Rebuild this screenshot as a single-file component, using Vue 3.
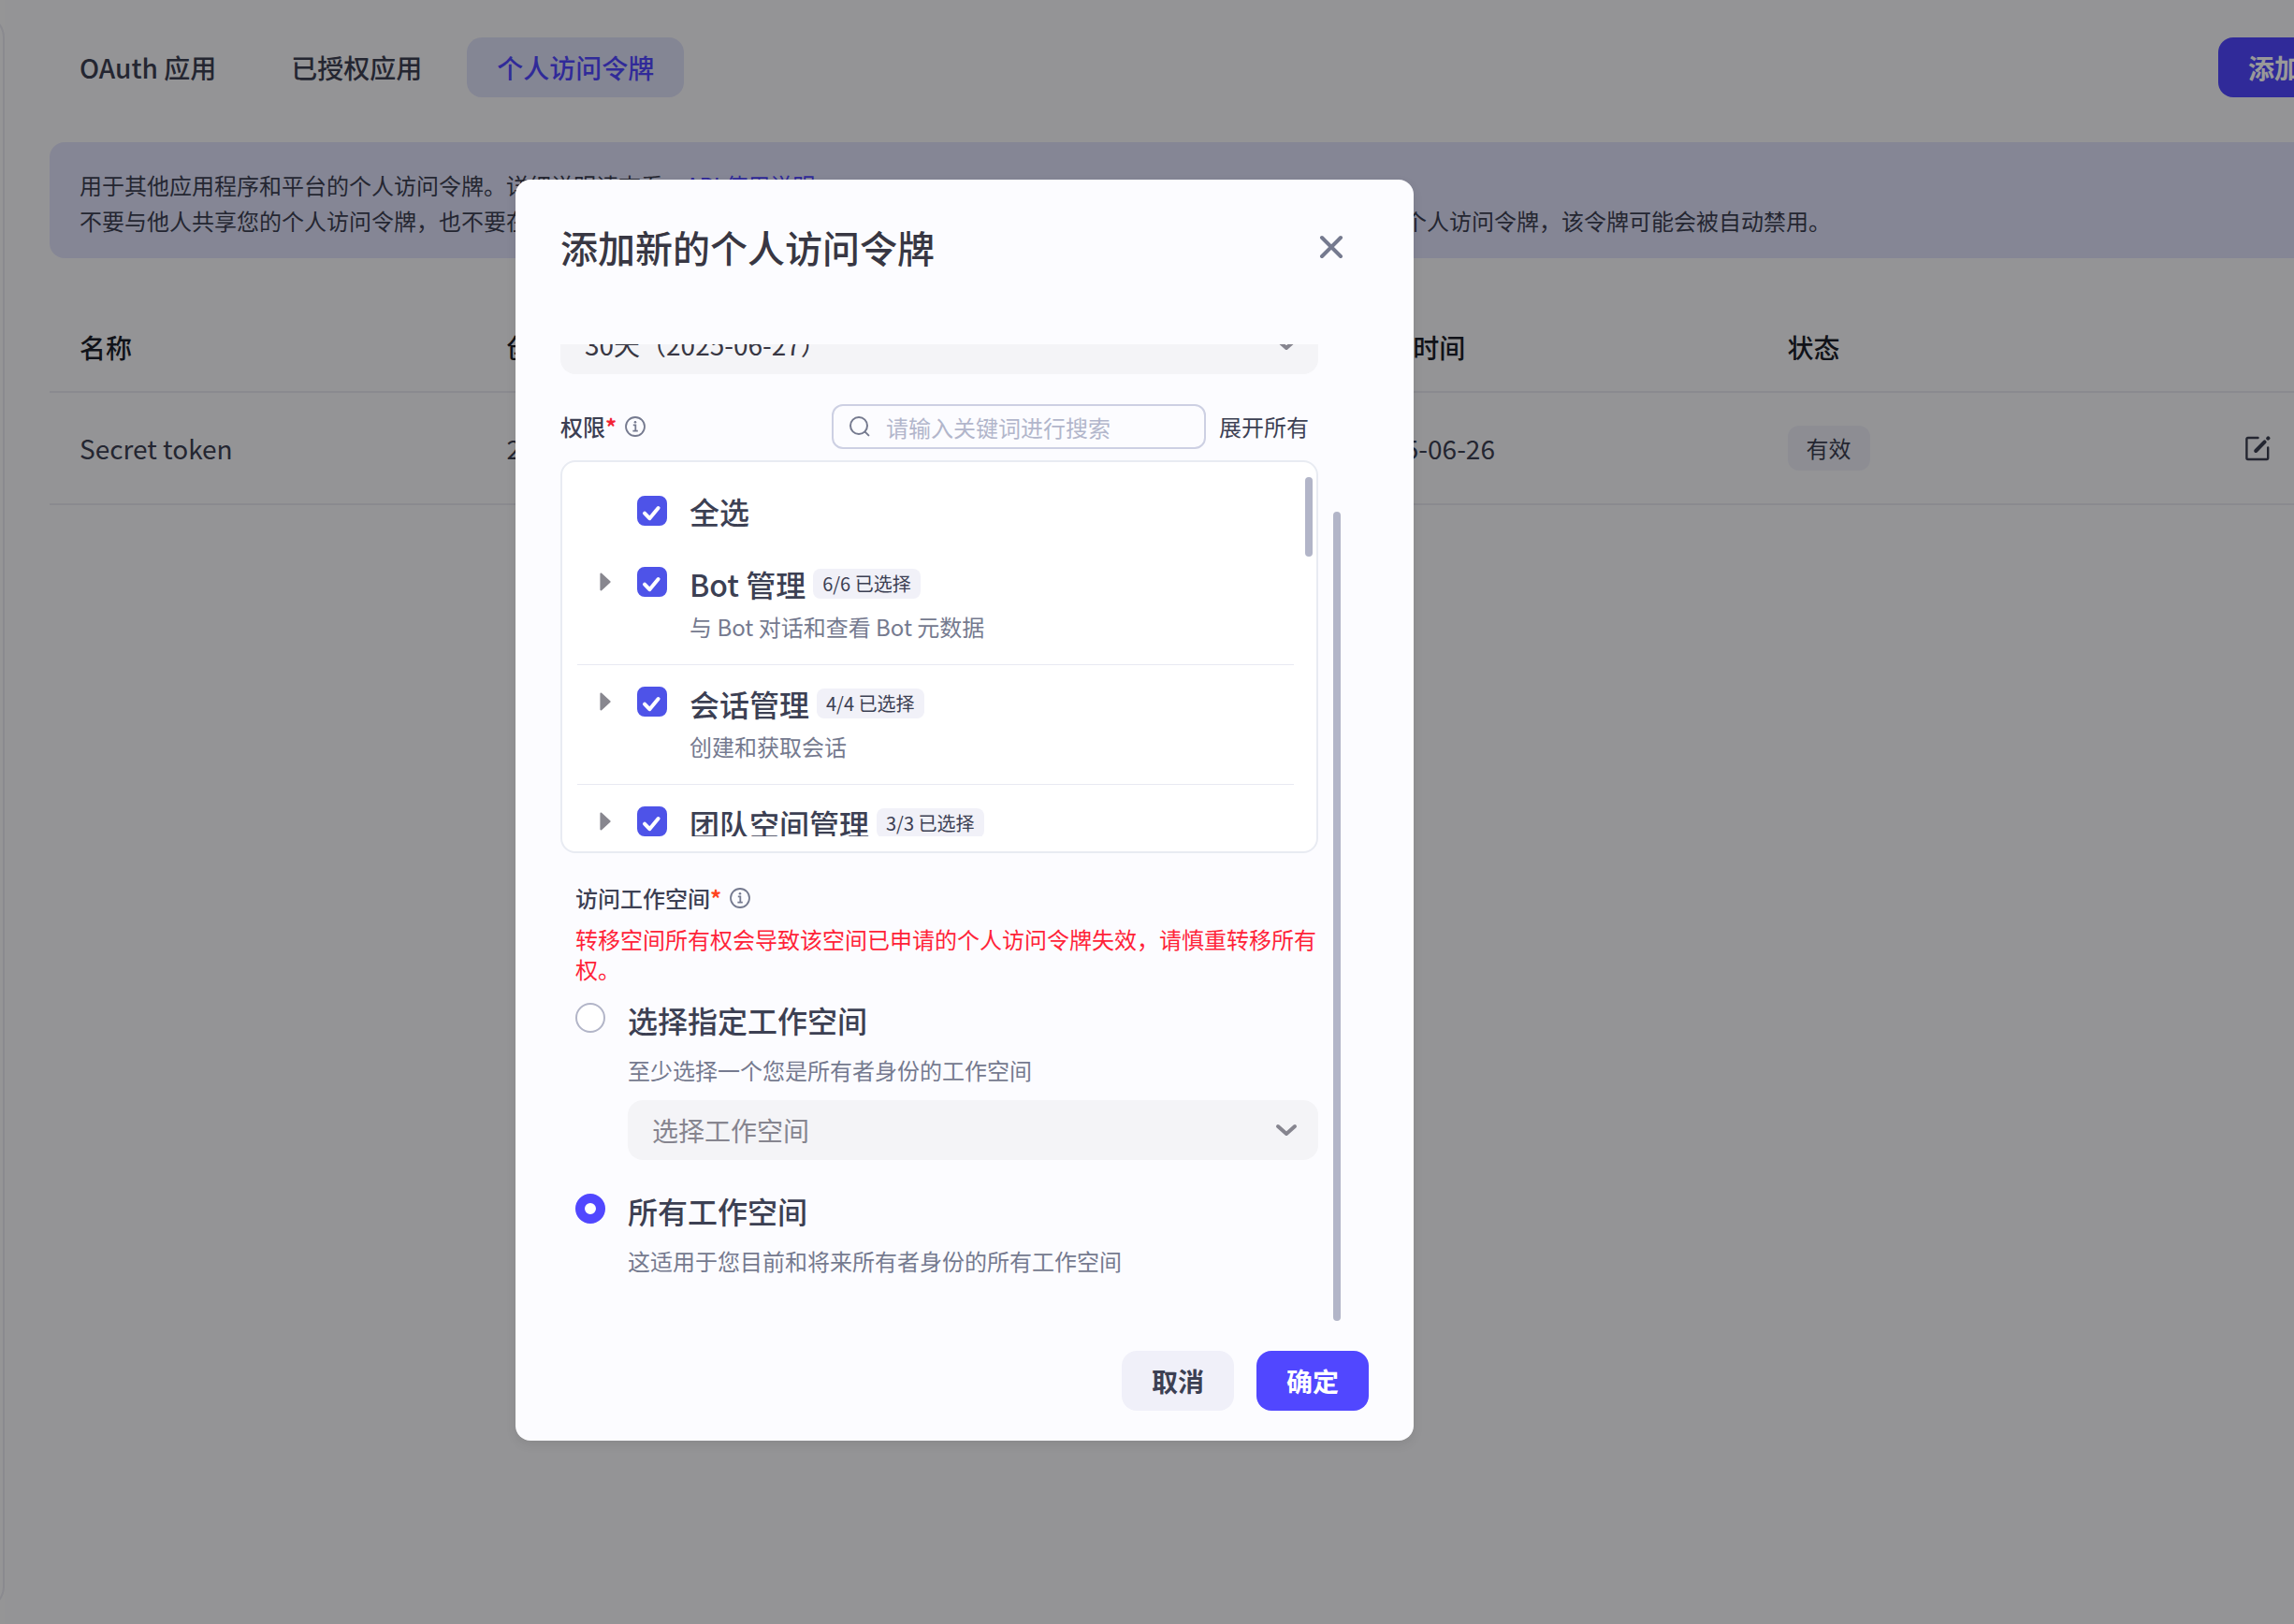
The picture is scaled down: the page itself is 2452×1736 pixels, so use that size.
<template>
  <div class="page">
    <aside class="sidebar"></aside>

    <main class="content">
      <div class="toolbar">
        <nav class="tabs">
          <button
            v-for="tab in tabs"
            :key="tab"
            type="button"
            class="tab"
            :class="{ active: tab === activeTab }"
            @click="activeTab = tab"
          >{{ tab }}</button>
        </nav>
        <button type="button" class="btn primary" @click="open = true">添加新令牌</button>
      </div>

      <div class="notice">
        <p>用于其他应用程序和平台的个人访问令牌。详细说明请查看：<a href="#">API 使用说明</a></p>
        <p>不要与他人共享您的个人访问令牌，也不要在浏览器或其他客户端代码中暴露它，以保护您的账户安全。如果我们发现了任何已泄露的个人访问令牌，该令牌可能会被自动禁用。</p>
      </div>

      <table class="tokens">
        <thead>
          <tr>
            <th>名称</th>
            <th>创建时间</th>
            <th>最后使用时间</th>
            <th>过期时间</th>
            <th>状态</th>
            <th class="actions"></th>
          </tr>
        </thead>
        <tbody>
          <tr v-for="token in tokens" :key="token.name">
            <td>{{ token.name }}</td>
            <td>{{ token.created }}</td>
            <td>{{ token.lastUsed }}</td>
            <td>{{ token.expires }}</td>
            <td><span class="status">{{ token.status }}</span></td>
            <td class="actions">
              <button type="button" class="icon-btn" aria-label="编辑">
                <svg width="28" height="28" viewBox="0 0 28 28" fill="none" stroke="currentColor" stroke-width="2.4" stroke-linecap="round" stroke-linejoin="round">
                  <path d="M14.5 3H3.8C3 3 2.4 3.6 2.4 4.4V24.6C2.4 25.4 3 26 3.8 26H23.8C24.6 26 25.2 25.4 25.2 24.6V13.5" />
                  <path d="M12.2 17L21.6 7.4" stroke-width="4" />
                  <path d="M25.2 3.6L25.4 3.4" stroke-width="4" />
                </svg>
              </button>
            </td>
          </tr>
        </tbody>
      </table>
    </main>

    <div v-if="open" class="mask">
      <form class="modal" role="dialog" aria-labelledby="modal-title" @submit.prevent="open = false">
        <header class="modal-header">
          <h2 id="modal-title">添加新的个人访问令牌</h2>
          <button type="button" class="icon-btn close" aria-label="关闭" @click="open = false">
            <svg width="26" height="26" viewBox="0 0 26 26" fill="none" stroke="currentColor" stroke-width="4" stroke-linecap="round">
              <path d="M3 3L23 23M23 3L3 23" />
            </svg>
          </button>
        </header>

        <div class="modal-body">
          <div class="fields">
            <div class="select expiry">
              <select v-model="expiry" aria-label="过期时间">
                <option value="30">30天（2025-06-27）</option>
              </select>
              <svg class="chevron" width="24" height="14" viewBox="0 0 24 14" fill="none" stroke="currentColor" stroke-width="4" stroke-linecap="round" stroke-linejoin="round">
                <path d="M3 3L12 11L21 3" />
              </svg>
            </div>

            <div class="scope-bar">
              <span class="field-label">权限<i class="required">*</i></span>
              <svg class="info" width="24" height="24" viewBox="0 0 24 24" fill="none" stroke="currentColor" stroke-width="1.8">
                <circle cx="12" cy="12" r="10" />
                <path d="M9.8 10.4H12.3V16.4M9.4 16.6H14.8" />
                <circle cx="12" cy="7.2" r="1.3" fill="currentColor" stroke="none" />
              </svg>
              <label class="search">
                <svg width="24" height="24" viewBox="0 0 24 24" fill="none" stroke="currentColor" stroke-width="2" stroke-linecap="round">
                  <circle cx="11" cy="11" r="9" />
                  <path d="M17.6 17.6L21.4 21.4" />
                </svg>
                <input v-model="keyword" type="text" placeholder="请输入关键词进行搜索" aria-label="搜索权限" />
              </label>
              <button type="button" class="expand">展开所有</button>
            </div>

            <div class="scope-box">
              <div class="scope-list">
                <label class="scope-all">
                  <span class="check">
                    <input type="checkbox" :checked="allChecked" @change="toggleAll" />
                    <svg width="32" height="32" viewBox="0 0 32 32"><path d="M8 18.6L13.3 24.2L22.6 13" /></svg>
                  </span>
                  <span class="scope-title">全选</span>
                </label>

                <div v-for="scope in scopes" :key="scope.name" class="scope">
                  <button type="button" class="arrow" :aria-label="'展开' + scope.name">
                    <svg width="12" height="20" viewBox="0 0 12 20"><path d="M1.4 1.6L10.6 10L1.4 18.4Z" /></svg>
                  </button>
                  <span class="check">
                    <input :id="scope.id" v-model="scope.checked" type="checkbox" />
                    <svg width="32" height="32" viewBox="0 0 32 32"><path d="M8 18.6L13.3 24.2L22.6 13" /></svg>
                  </span>
                  <div class="scope-info">
                    <div class="scope-head">
                      <label :for="scope.id" class="scope-title">{{ scope.name }}</label>
                      <span class="count">{{ scope.total }}/{{ scope.total }} 已选择</span>
                    </div>
                    <p v-if="scope.desc" class="desc">{{ scope.desc }}</p>
                  </div>
                </div>
              </div>
              <div class="scrollbar"><div class="thumb short"></div></div>
            </div>

            <section class="workspace">
              <div class="workspace-label">
                <span class="field-label">访问工作空间<i class="required orange">*</i></span>
                <svg class="info" width="24" height="24" viewBox="0 0 24 24" fill="none" stroke="currentColor" stroke-width="1.8">
                  <circle cx="12" cy="12" r="10" />
                  <path d="M9.8 10.4H12.3V16.4M9.4 16.6H14.8" />
                  <circle cx="12" cy="7.2" r="1.3" fill="currentColor" stroke="none" />
                </svg>
              </div>
              <p class="warning">转移空间所有权会导致该空间已申请的个人访问令牌失效，请慎重转移所有权。</p>

              <div class="option">
                <input id="ws-some" v-model="workspace" class="radio" type="radio" name="workspace" value="some" />
                <div class="option-info">
                  <label for="ws-some">选择指定工作空间</label>
                  <p class="desc">至少选择一个您是所有者身份的工作空间</p>
                  <div class="select">
                    <select class="placeholder" aria-label="选择工作空间">
                      <option>选择工作空间</option>
                    </select>
                    <svg class="chevron" width="24" height="14" viewBox="0 0 24 14" fill="none" stroke="currentColor" stroke-width="4" stroke-linecap="round" stroke-linejoin="round">
                      <path d="M3 3L12 11L21 3" />
                    </svg>
                  </div>
                </div>
              </div>

              <div class="option">
                <input id="ws-all" v-model="workspace" class="radio" type="radio" name="workspace" value="all" />
                <div class="option-info">
                  <label for="ws-all">所有工作空间</label>
                  <p class="desc">这适用于您目前和将来所有者身份的所有工作空间</p>
                </div>
              </div>
            </section>
          </div>
          <div class="scrollbar bottom"><div class="thumb tall"></div></div>
        </div>

        <footer class="modal-footer">
          <button type="button" class="btn" @click="open = false">取消</button>
          <button type="submit" class="btn primary">确定</button>
        </footer>
      </form>
    </div>
  </div>
</template>

<script setup>
import { computed, ref } from 'vue';

const tabs = ['OAuth 应用', '已授权应用', '个人访问令牌'];
const activeTab = ref('个人访问令牌');
const open = ref(true);
const expiry = ref('30');
const keyword = ref('');
const workspace = ref('all');

const tokens = [
  { name: 'Secret token', created: '2025-05-27', lastUsed: '2025-05-27', expires: '2025-06-26', status: '有效' }
];

const scopes = ref([
  { id: 'scope-bot', name: 'Bot 管理', desc: '与 Bot 对话和查看 Bot 元数据', total: 6, checked: true },
  { id: 'scope-chat', name: '会话管理', desc: '创建和获取会话', total: 4, checked: true },
  { id: 'scope-team', name: '团队空间管理', desc: '', total: 3, checked: true }
]);

const allChecked = computed(() => scopes.value.every(s => s.checked));

const toggleAll = (event) => {
  scopes.value.forEach(s => {
    s.checked = event.target.checked;
  });
};
</script>

<style>
body { background: #f9f9fb; }
</style>

<style scoped>
.page {
  display: flex;
  position: relative;
  min-height: 100vh;
  overflow: hidden;
  font-family: "Noto Sans CJK SC", sans-serif;
  font-size: 28px;
  color: #3c4053;
}

.page * { box-sizing: border-box; }

button, input, select { font: inherit; color: inherit; }
button { border: 0; background: none; padding: 0; cursor: pointer; }
p, h2 { margin: 0; }

.sidebar {
  flex: none;
  width: 80px;
  margin: 16px 0 16px -75px;
  border: 2px solid #e6e6ef;
  border-radius: 24px;
}

/* the table area runs past the right edge of the window */
.content {
  flex: 1;
  min-width: 0;
  margin-right: -123px;
  padding: 40px 0 0 48px;
  background: #f7f7fa;
}

.toolbar {
  display: flex;
  justify-content: space-between;
  margin-bottom: 48px;
}
.tabs { display: flex; gap: 16px; }
.tab {
  height: 64px;
  padding: 0 32px;
  border-radius: 16px;
  font-weight: 500;
}
.tab.active { background: #dddff7; color: #5147ff; }

.btn {
  height: 64px;
  padding: 0 32px;
  border-radius: 16px;
  background: #f0f0f9;
  color: #3c4053;
  font-weight: 700;
}
.btn.primary { background: #5147ff; color: #fff; }

.notice {
  padding: 27px 32px 21px;
  border-radius: 16px;
  background: #dee0f9;
  font-size: 24px;
  line-height: 38px;
  white-space: nowrap;
}
.notice a { color: #5147ff; text-decoration: none; }

.tokens {
  width: 100%;
  margin-top: 47px;
  table-layout: fixed;
  border-collapse: collapse;
}
.tokens th, .tokens td {
  padding: 0 32px;
  border-bottom: 2px solid #e6e6ef;
  text-align: left;
}
.tokens th { height: 96px; font-weight: 500; color: #1c1f2b; }
.tokens td { height: 120px; }
.tokens .actions { width: 240px; padding-left: 64px; }
.status {
  display: inline-block;
  padding: 0 20px;
  border-radius: 12px;
  background: #ebecf6;
  font-size: 24px;
  line-height: 48px;
}

.icon-btn { display: flex; align-items: center; justify-content: center; }

.mask {
  position: absolute;
  inset: 0;
  display: flex;
  align-items: center;
  justify-content: center;
  padding: 0 390px 4px 0;
  background: rgba(0, 0, 0, 0.4);
}
.modal {
  width: 960px;
  border-radius: 16px;
  background: #fcfcff;
  box-shadow: 0 4px 12px rgba(0, 0, 0, 0.08);
}
.modal-header {
  display: flex;
  align-items: flex-start;
  justify-content: space-between;
  height: 176px;
  padding: 44px 68px 0 48px;
}
.modal-header h2 {
  font-size: 40px;
  font-weight: 500;
  line-height: 56px;
  color: #383743;
}
.close { width: 40px; height: 56px; color: #757a8f; }

.modal-body {
  display: flex;
  gap: 16px;
  padding: 0 78px 0 48px;
  overflow: hidden;
}
.fields { flex: 1; min-width: 0; padding-bottom: 48px; }

.select { position: relative; }
/* scrolled halfway under the header */
.expiry { margin-top: -32px; color: #383743; }
.select select {
  display: block;
  width: 100%;
  height: 64px;
  padding: 0 26px;
  border: 0;
  border-radius: 16px;
  background: #f4f4f7;
  appearance: none;
}
.select .placeholder { color: #86858f; }
.chevron {
  position: absolute;
  top: 25px;
  right: 22px;
  color: #86858f;
}

.scope-bar {
  display: flex;
  align-items: center;
  margin: 32px 0 12px;
  font-size: 24px;
}
.field-label { font-size: 24px; line-height: 32px; font-weight: 500; }
.required { color: #f22435; font-style: normal; font-weight: 700; }
.required.orange { color: #ff441e; }
.info { margin-left: 8px; color: #757a8f; }

.search {
  display: flex;
  align-items: center;
  gap: 16px;
  width: 400px;
  height: 48px;
  margin-left: auto;
  padding: 0 16px;
  border: 2px solid #cdd0e3;
  border-radius: 12px;
  color: #757a8f;
}
.search input {
  flex: 1;
  min-width: 0;
  padding: 0;
  border: 0;
  outline: none;
  background: none;
  color: #3c4053;
}
.search input::placeholder { color: #b2b6cb; }
.expand { margin: 0 10px 0 14px; padding-bottom: 2px; }

.scope-box {
  display: flex;
  gap: 12px;
  padding: 16px 4px 16px 16px;
  border: 2px solid #e8ebf2;
  border-radius: 16px;
  background: #fff;
}
.scope-list { flex: 1; height: 384px; overflow: hidden; }
.scope-all {
  display: flex;
  gap: 24px;
  height: 73px;
  padding: 20px 0 0 64px;
  line-height: 32px;
}
.scope {
  display: flex;
  padding: 23px 0 24px 24px;
  border-bottom: 1px solid #e8e9f2;
  line-height: 36px;
}
.scope-title { font-size: 32px; font-weight: 500; }
.arrow { display: flex; width: 40px; height: 32px; align-items: center; }
.arrow svg {
  fill: #88878f;
  stroke: #88878f;
  stroke-width: 2;
  stroke-linejoin: round;
}

.check { display: grid; flex: none; width: 32px; height: 32px; }
.check input {
  grid-area: 1 / 1;
  width: 32px;
  height: 32px;
  margin: 0;
  border: 2px solid #b2b5c8;
  border-radius: 8px;
  appearance: none;
}
.check input:checked { border-color: #4e53e8; background: #4e53e8; }
.check svg {
  grid-area: 1 / 1;
  z-index: 1;
  fill: none;
  stroke: #fff;
  stroke-width: 4;
  stroke-linecap: round;
  stroke-linejoin: round;
  pointer-events: none;
}

.scope-info { margin-left: 24px; }
.scope-head { display: flex; gap: 8px; }
.count {
  height: 32px;
  margin-top: 2px;
  padding: 0 10px;
  border-radius: 8px;
  background: #f1f1f8;
  font-size: 20px;
  line-height: 32px;
}
.desc {
  font-size: 24px;
  line-height: 32px;
  color: #757a8f;
}
.scope .desc { margin-top: 12px; }

.scrollbar { display: flex; flex: none; flex-direction: column; width: 8px; }
.scrollbar.bottom { justify-content: flex-end; }
.thumb { border-radius: 4px; background: #b2b5c8; }
.thumb.short { height: 85px; }
.thumb.tall { height: 865px; }

.workspace { padding: 32px 0 0 16px; }
.workspace-label { display: flex; align-items: center; }
.warning {
  margin-top: 12px;
  font-size: 24px;
  line-height: 32px;
  color: #ff2338;
}
.option { display: flex; gap: 24px; margin-top: 36px; }
.warning + .option { margin-top: 20px; }
.radio {
  flex: none;
  width: 32px;
  height: 32px;
  margin: 0;
  border: 2px solid #b2b5c8;
  border-radius: 50%;
  background: #fff;
  appearance: none;
}
.radio:checked { border: 10px solid #5147ff; }
.option-info { flex: 1; }
.option label {
  display: block;
  font-size: 32px;
  font-weight: 500;
  line-height: 36px;
}
.option .desc { margin-top: 20px; }
.option .select { margin-top: 16px; }

.modal-footer {
  display: flex;
  justify-content: flex-end;
  gap: 24px;
  padding: 32px 48px;
}
</style>
